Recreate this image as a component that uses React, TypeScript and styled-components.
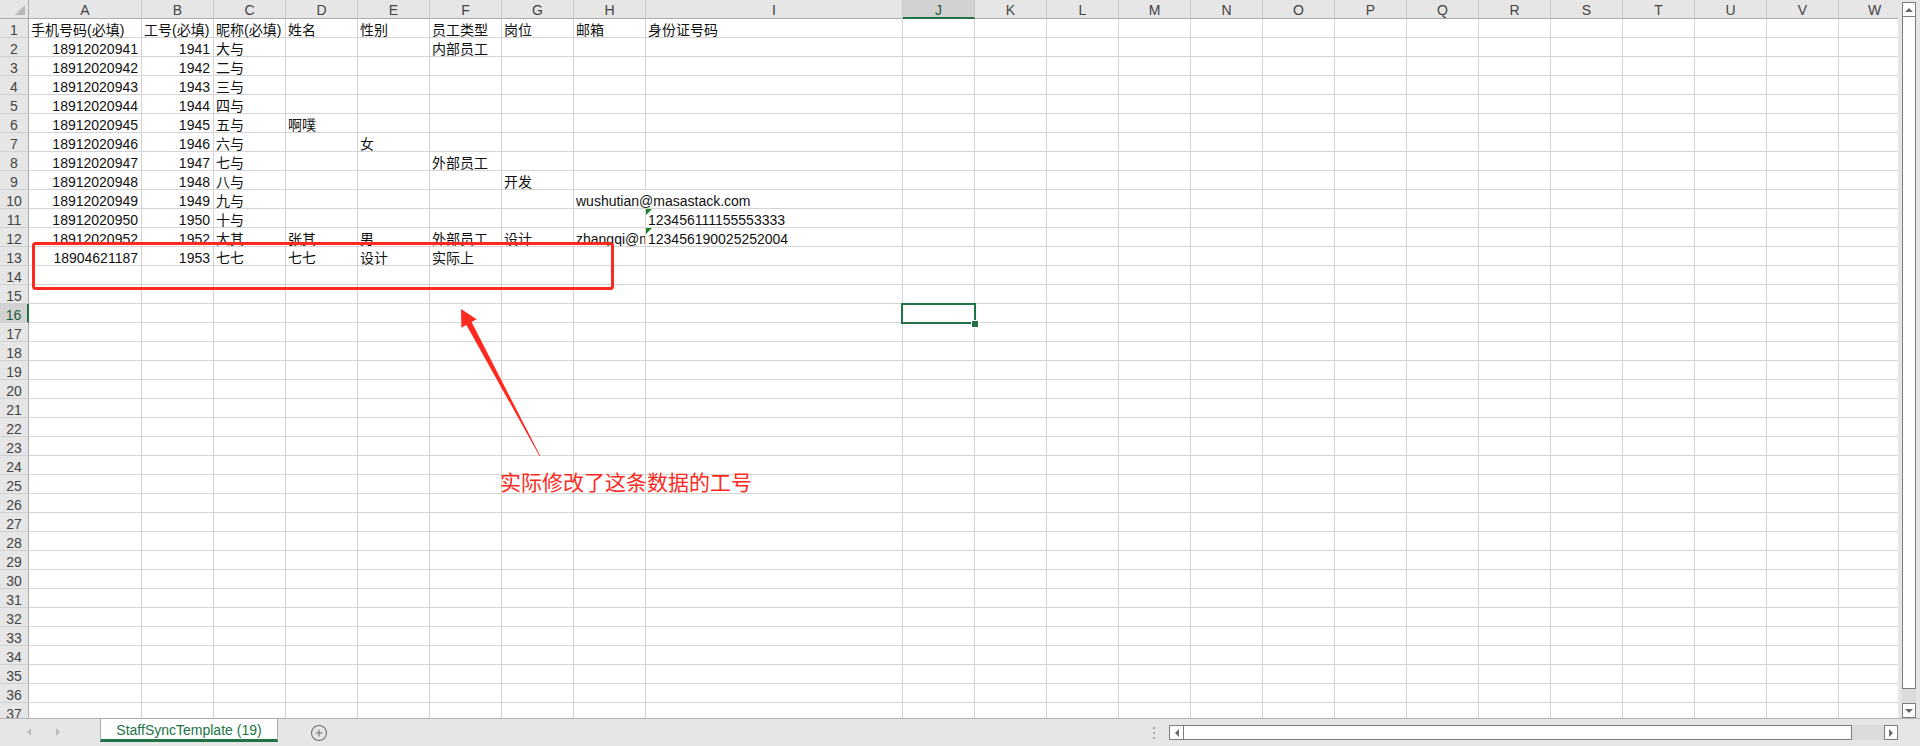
import React from "react";
import styled, { createGlobalStyle } from "styled-components";
import { CirclePlus } from "lucide-react";

const GREEN = "#217346";
const GRID = "#d4d4d4";
const HEAD_BG = "#e6e6e6";
const HEAD_SEL = "#d2d2d2";
const HEAD_LINE = "#ababab";
const RED = "#ff2a1f";
const FONT = `"Liberation Sans", "Noto Sans CJK SC", sans-serif`;

const COLS = ["A","B","C","D","E","F","G","H","I","J","K","L","M","N","O","P","Q","R","S","T","U","V","W"];
const WIDTHS: Record<string, number> = { A: 113, I: 257 };
const GRID_COLS = `29px ${COLS.map((c) => `${WIDTHS[c] ?? 72}px`).join(" ")}`;

type CellData = { t: string; r?: boolean; clip?: boolean; spill?: boolean; flag?: boolean };

const NAMES = ["大与", "二与", "三与", "四与", "五与", "六与", "七与", "八与", "九与", "十与"];

const DATA: Record<number, Record<string, CellData>> = {
  1: {
    A: { t: "手机号码(必填)" }, B: { t: "工号(必填)" }, C: { t: "昵称(必填)" }, D: { t: "姓名" },
    E: { t: "性别" }, F: { t: "员工类型" }, G: { t: "岗位" }, H: { t: "邮箱" }, I: { t: "身份证号码" },
  },
};
NAMES.forEach((n, i) => {
  DATA[i + 2] = {
    A: { t: String(18912020941 + i), r: true },
    B: { t: String(1941 + i), r: true },
    C: { t: n },
  };
});
DATA[2].F = { t: "内部员工" };
DATA[6].D = { t: "啊噗" };
DATA[7].E = { t: "女" };
DATA[8].F = { t: "外部员工" };
DATA[9].G = { t: "开发" };
DATA[10].H = { t: "wushutian@masastack.com", spill: true };
DATA[11].I = { t: "123456111155553333", flag: true };
DATA[12] = {
  A: { t: "18912020952", r: true }, B: { t: "1952", r: true }, C: { t: "大其" }, D: { t: "张其" },
  E: { t: "男" }, F: { t: "外部员工" }, G: { t: "设计" }, H: { t: "zhangqi@masastack.com", clip: true },
  I: { t: "123456190025252004", flag: true },
};
DATA[13] = {
  A: { t: "18904621187", r: true }, B: { t: "1953", r: true }, C: { t: "七七" }, D: { t: "七七" },
  E: { t: "设计" }, F: { t: "实际上" },
};

const GlobalStyle = createGlobalStyle`
  html, body { margin: 0; padding: 0; width: 1920px; height: 746px; overflow: hidden; background: #fff; }
  #root { width: 1920px; height: 746px; }
  *, *::before, *::after { box-sizing: border-box; }
`;

const Window = styled.div`
  position: relative;
  width: 1920px;
  height: 746px;
  display: flex;
  flex-direction: column;
  overflow: hidden;
  background: #fff;
  font-family: ${FONT};
`;

const SheetArea = styled.div`
  display: flex;
  height: 718px;
  flex: none;
`;

const GridViewport = styled.div`
  width: 1898px;
  height: 718px;
  overflow: hidden;
  flex: none;
`;

const Sheet = styled.div`
  display: grid;
  grid-template-columns: ${GRID_COLS};
  grid-auto-rows: 19px;
  width: max-content;
  background: #fff;
`;

const Corner = styled.div`
  background: ${HEAD_BG};
  border-right: 1px solid ${HEAD_LINE};
  border-bottom: 1px solid ${HEAD_LINE};
  display: flex;
  align-items: flex-end;
  justify-content: flex-end;
  padding: 0 3px 3px 0;
`;

const CornerMark = styled.span`
  width: 0;
  height: 0;
  border-left: 10px solid transparent;
  border-bottom: 10px solid #b9b9b9;
`;

const ColHead = styled.div<{ $sel?: boolean }>`
  background: ${(p) => (p.$sel ? HEAD_SEL : HEAD_BG)};
  border-right: 1px solid #c8c8c8;
  border-bottom: ${(p) => (p.$sel ? `2px solid ${GREEN}` : `1px solid ${HEAD_LINE}`)};
  color: ${(p) => (p.$sel ? "#1d5c38" : "#444")};
  font-size: 14px;
  line-height: 18px;
  padding-top: 1px;
  text-align: center;
  overflow: hidden;
`;

const RowHead = styled.div<{ $sel?: boolean }>`
  background: ${(p) => (p.$sel ? HEAD_SEL : HEAD_BG)};
  border-right: ${(p) => (p.$sel ? `2px solid ${GREEN}` : `1px solid ${HEAD_LINE}`)};
  border-bottom: 1px solid #d0d0d0;
  color: ${(p) => (p.$sel ? "#1d5c38" : "#444")};
  font-size: 14px;
  line-height: 19px;
  padding-top: 2px;
  text-align: center;
  overflow: hidden;
`;

const Cell = styled.div<{ $right?: boolean; $clip?: boolean; $spill?: boolean; $flag?: boolean }>`
  position: relative;
  min-width: 0;
  border-right: 1px solid ${(p) => (p.$spill ? "transparent" : GRID)};
  border-bottom: 1px solid ${GRID};
  padding: 2px ${(p) => (p.$right ? "3px" : "2px")} 0 2px;
  font-size: 14px;
  line-height: 19px;
  color: #111;
  white-space: nowrap;
  text-align: ${(p) => (p.$right ? "right" : "left")};
  overflow: ${(p) => (p.$clip ? "hidden" : "visible")};

  &::before {
    content: "";
    display: ${(p) => (p.$flag ? "block" : "none")};
    position: absolute;
    left: 0;
    top: 0;
    width: 0;
    height: 0;
    border-top: 6px solid #1b7f2a;
    border-right: 6px solid transparent;
  }
`;

const Selection = styled.span`
  position: absolute;
  left: -2px;
  top: -1px;
  width: 75px;
  height: 21px;
  border: 2px solid ${GREEN};
  pointer-events: none;
  z-index: 2;

  &::after {
    content: "";
    position: absolute;
    left: 69px;
    top: 16px;
    width: 6px;
    height: 6px;
    background: ${GREEN};
    outline: 1px solid #fff;
  }
`;

/* vertical scrollbar */
const VScroll = styled.div`
  width: 22px;
  flex: none;
  background: ${HEAD_BG};
  display: flex;
  justify-content: center;
  padding-top: 2px;
`;

const VTrack = styled.div`
  width: 14px;
  height: 716px;
  display: flex;
  flex-direction: column;
`;

const ScrollBtn = styled.div`
  flex: none;
  width: 14px;
  height: 15px;
  border: 1px solid #7c7c7c;
  background: #fff;
  display: flex;
  align-items: center;
  justify-content: center;
`;

const HScrollBtn = styled(ScrollBtn)`
  width: 15px;
  height: 15px;
`;

const VThumb = styled.div`
  flex: none;
  height: 672px;
  background: #fff;
  border: 1px solid #7c7c7c;
  border-top: none;
`;

const TrackGap = styled.div`
  flex: 1;
  background: #dcdcdc;
`;

const Tri = styled.span<{ $dir: "up" | "down" | "left" | "right"; $color?: string }>`
  width: 0;
  height: 0;
  ${(p) => {
    const c = p.$color ?? "#6a6a6a";
    switch (p.$dir) {
      case "up":
        return `border-left:4px solid transparent;border-right:4px solid transparent;border-bottom:4px solid ${c};`;
      case "down":
        return `border-left:4px solid transparent;border-right:4px solid transparent;border-top:4px solid ${c};`;
      case "left":
        return `border-top:4px solid transparent;border-bottom:4px solid transparent;border-right:4px solid ${c};`;
      default:
        return `border-top:4px solid transparent;border-bottom:4px solid transparent;border-left:4px solid ${c};`;
    }
  }}
`;

/* tab bar */
const TabBar = styled.div`
  flex: none;
  height: 28px;
  background: ${HEAD_BG};
  border-top: 1px solid #b4b4b4;
  display: flex;
  align-items: stretch;
`;

const NavArea = styled.div`
  width: 100px;
  flex: none;
  display: flex;
  align-items: center;
  gap: 25px;
  padding: 0 0 1px 27px;
`;

const SheetTab = styled.div`
  width: 178px;
  flex: none;
  height: 24px;
  margin-top: -1px;
  background: #fff;
  border-left: 1px solid ${HEAD_LINE};
  border-right: 1px solid ${HEAD_LINE};
  border-top: 1px solid ${HEAD_LINE};
  border-bottom: 3px solid ${GREEN};
  color: ${GREEN};
  font-size: 14px;
  line-height: 18px;
  padding-top: 2px;
  text-align: center;
  white-space: nowrap;
`;

const AddArea = styled.div`
  width: 82px;
  flex: none;
  display: flex;
  align-items: center;
  justify-content: center;
  color: #6e6e6e;
  padding-top: 1px;
`;

const Spacer = styled.div`
  flex: 1;
`;

const Dots = styled.div`
  width: 17px;
  flex: none;
  display: flex;
  flex-direction: column;
  gap: 3px;
  padding: 8px 0 0 1px;
`;

const Dot = styled.span`
  width: 2px;
  height: 2px;
  background: #a6a6a6;
`;

const HScroll = styled.div`
  width: 729px;
  flex: none;
  height: 15px;
  margin-top: 6px;
  display: flex;
`;

const HThumb = styled.div`
  width: 668px;
  flex: none;
  background: #fff;
  border: 1px solid #7c7c7c;
  border-left: none;
`;

const RightPad = styled.div`
  width: 22px;
  flex: none;
`;

/* annotation */
const Annotation = styled.svg`
  position: absolute;
  left: 0;
  top: 0;
  pointer-events: none;
  z-index: 5;
`;

const Note = styled.div`
  position: absolute;
  left: 500px;
  top: 471px;
  z-index: 5;
  color: ${RED};
  font-family: "Noto Sans CJK SC", sans-serif;
  font-size: 21px;
  line-height: 21px;
  white-space: nowrap;
`;

export default function App() {
  const rows = Array.from({ length: 37 }, (_, i) => i + 1);
  return (
    <>
      <GlobalStyle />
      <Window>
        <SheetArea>
          <GridViewport>
            <Sheet>
              <Corner>
                <CornerMark />
              </Corner>
              {COLS.map((c) => (
                <ColHead key={c} $sel={c === "J"}>
                  {c}
                </ColHead>
              ))}
              {rows.map((r) => (
                <React.Fragment key={r}>
                  <RowHead $sel={r === 16}>{r}</RowHead>
                  {COLS.map((c) => {
                    const d = DATA[r]?.[c];
                    return (
                      <Cell key={c} $right={d?.r} $clip={d?.clip} $spill={d?.spill} $flag={d?.flag}>
                        {d?.t}
                        {r === 16 && c === "J" && <Selection />}
                      </Cell>
                    );
                  })}
                </React.Fragment>
              ))}
            </Sheet>
          </GridViewport>
          <VScroll>
            <VTrack>
              <ScrollBtn>
                <Tri $dir="up" />
              </ScrollBtn>
              <VThumb />
              <TrackGap />
              <ScrollBtn>
                <Tri $dir="down" />
              </ScrollBtn>
            </VTrack>
          </VScroll>
        </SheetArea>
        <TabBar>
          <NavArea>
            <Tri $dir="left" $color="#bdbdbd" />
            <Tri $dir="right" $color="#bdbdbd" />
          </NavArea>
          <SheetTab>StaffSyncTemplate (19)</SheetTab>
          <AddArea>
            <CirclePlus size={18} strokeWidth={1.4} />
          </AddArea>
          <Spacer />
          <Dots>
            <Dot />
            <Dot />
            <Dot />
          </Dots>
          <HScroll>
            <HScrollBtn>
              <Tri $dir="left" />
            </HScrollBtn>
            <HThumb />
            <TrackGap />
            <ScrollBtn>
              <Tri $dir="right" />
            </ScrollBtn>
          </HScroll>
          <RightPad />
        </TabBar>
        <Annotation width={1920} height={746} viewBox="0 0 1920 746">
          <rect x={33.5} y={243.5} width={579} height={45} rx={2} fill="none" stroke={RED} strokeWidth={3} strokeLinejoin="round" />
          <polygon
            points="540.3,456 539.6,456.3 466.4,324.9 461.4,327.8 461,309 476.6,319.3 471.6,322.1"
            fill={RED}
          />
        </Annotation>
        <Note>实际修改了这条数据的工号</Note>
      </Window>
    </>
  );
}
